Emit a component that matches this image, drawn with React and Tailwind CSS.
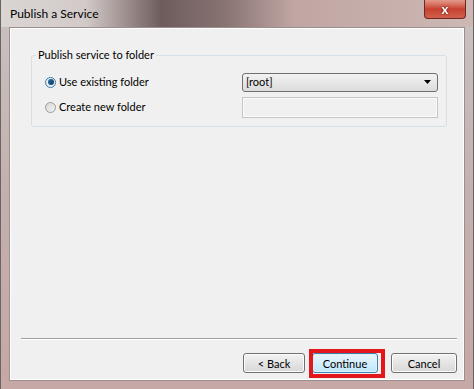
const font = { fontFamily: 'Lato, "Noto Sans", sans-serif' };

const Radio = ({ checked, label }) => (
    <label className="flex items-center h-[20px] gap-[3px] text-[11px] text-black">
        <span
            className={`w-[11px] h-[11px] rounded-full border flex items-center justify-center ${
                checked ? 'border-[#3d7bad] bg-[#e7eef4]' : 'border-[#9a9a9a] bg-gradient-to-br from-[#d8d8d8] to-[#f4f4f4]'
            }`}
        >
            {checked && <span className="w-[6px] h-[6px] rounded-full bg-gradient-to-br from-[#2b6fa0] to-[#0b3b5e]" />}
        </span>
        {label}
    </label>
);

const Button = ({ children, primary, width = 'w-[66px]' }) => (
    <button
        className={`block h-[20px] ${width} rounded-[3px] border text-[11px] text-black leading-none ${
            primary
                ? 'border-[#3c7fb1] bg-gradient-to-b from-[#eaf6fd] to-[#bee6fd] shadow-[inset_0_0_0_1px_#dff2fc]'
                : 'border-[#707070] bg-gradient-to-b from-[#f2f2f2] to-[#d8d8d8] shadow-[inset_0_0_0_1px_#fcfcfc]'
        }`}
    >
        {children}
    </button>
);

export default function App() {
    return (
        <div
            style={font}
            className="w-[474px] h-[389px] flex flex-col bg-gradient-to-b from-[#c9c3c2] via-[#c3b0ae] to-[#c6a8a6] border-l border-r border-[#6b6464] overflow-hidden"
        >
            {/* title bar */}
            <div className="h-[27px] flex items-start bg-[linear-gradient(90deg,#dad6d4_0%,#d2cac8_18%,#6e5c5c_34%,#8a7474_48%,#c0a6a3_62%,#cdb8b4_100%)]">
                <span className="ml-[9px] mt-[6px] text-[12px] text-black leading-[15px]">Publish a Service</span>
                <div className="ml-auto mr-[7px] w-[42px] h-[19px] rounded-b-[4px] border border-t-0 border-[#6e2a22] bg-gradient-to-b from-[#e39a8c] via-[#c8412f] to-[#d0604c] flex items-center justify-center">
                    <span className="text-white text-[13px] font-bold leading-none drop-shadow-[0_0_1px_#4a120c]">x</span>
                </div>
            </div>

            {/* client area */}
            <div className="flex-1 ml-[8px] mr-[8px] flex flex-col bg-[#f0f0f0] border border-[#9c8e8d] shadow-[inset_0_0_0_1px_#ffffff]">
                <fieldset className="mt-[20px] ml-[21px] mr-[17px] border border-[#d5dfe5] rounded-[3px] pl-[13px] pr-[8px] pt-[10px] pb-[8px]">
                    <legend className="-ml-[9px] px-[2px] text-[11px] leading-[14px] text-black">Publish service to folder</legend>
                    <div className="grid grid-cols-[1fr_196px] gap-y-[5px] items-center">
                        <Radio checked label="Use existing folder" />
                        <div className="h-[19px] rounded-[3px] border border-[#707070] bg-gradient-to-b from-[#f2f2f2] to-[#dcdcdc] flex items-center px-[3px] text-[11px] text-black">
                            <span>[root]</span>
                            <svg className="ml-auto mr-[3px]" width="7" height="4" viewBox="0 0 7 4">
                                <path d="M0 0h7L3.5 4z" fill="#000" />
                            </svg>
                        </div>
                        <Radio label="Create new folder" />
                        <div className="h-[21px] border border-[#c5c5c5] bg-[#f0f0f0] shadow-[inset_0_0_0_1px_#fafafa]" />
                    </div>
                </fieldset>

                <div className="flex-1" />

                <div className="ml-[11px] mr-[7px] border-t border-[#a0a0a0] border-b border-b-white" />

                <div className="flex justify-end items-center mt-[13px] mb-[7px] mr-[7px]">
                    <Button width="w-[62px]">&lt; Back</Button>
                    <div className="relative flex ml-[7px]">
                        <Button primary>Continue</Button>
                        <div className="absolute left-[-3px] right-[-7px] top-[-4px] bottom-[-5px] border-[4px] border-[#e3161c]" />
                    </div>
                    <div className="flex ml-[13px]">
                        <Button>Cancel</Button>
                    </div>
                </div>
            </div>

            {/* bottom frame */}
            <div className="h-[8px]" />
        </div>
    );
}
